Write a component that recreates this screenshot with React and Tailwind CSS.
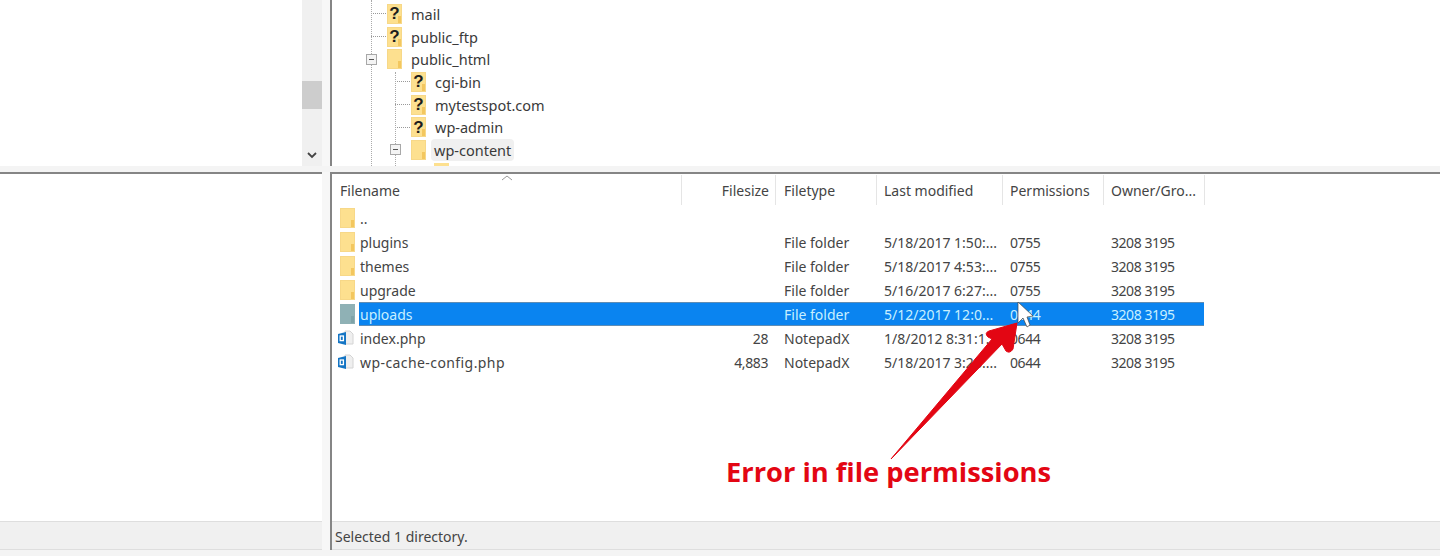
const FONT = "font-['Noto_Sans','Open_Sans',sans-serif]";

function Folder({ unknown, selected }) {
  return (
    <span className={"relative block h-[20px] w-[15px] shrink-0 border " + (selected ? "border-[#8fb1b5] bg-[#8fb1b5]" : "border-[#f7d888] bg-[#fde08f]")}>
      <span className={"absolute right-0 bottom-0 h-[7px] w-[3px] " + (selected ? "bg-[#7fa3a8]" : "bg-[#f3c75f]")} />
      {unknown && (
        <span className="absolute inset-0 flex items-center justify-center font-['Liberation_Sans',sans-serif] text-[17px] leading-none font-bold text-[#1c1c1c]">
          ?
        </span>
      )}
    </span>
  );
}

function TreeRow({ label, indent, unknown, minus, active }) {
  return (
    <div className={"flex h-[22.7px] items-center " + indent}>
      <span className="flex w-[21px] shrink-0 items-center">
        {minus ? (
          <span className="relative z-10 flex h-[11px] w-[11px] items-center justify-center border border-[#a8a8a8] bg-[#f4f4f4]">
            <span className="h-px w-[5px] bg-[#555]" />
          </span>
        ) : (
          <span className="ml-[5px] w-[15px] border-t border-dotted border-[#999]" />
        )}
      </span>
      <Folder unknown={unknown} />
      <span className={"rounded-sm px-[3px] text-[14.5px] leading-[22px] text-[#3a3a3a] " + (active ? "ml-[5px] bg-[#f0f0f0]" : "ml-[6px]")}>
        {label}
      </span>
    </div>
  );
}

const files = [
  { name: "..", folder: true },
  { name: "plugins", folder: true, type: "File folder", date: "5/18/2017 1:50:...", perm: "0755" },
  { name: "themes", folder: true, type: "File folder", date: "5/18/2017 4:53:...", perm: "0755" },
  { name: "upgrade", folder: true, type: "File folder", date: "5/16/2017 6:27:...", perm: "0755" },
  { name: "uploads", folder: true, type: "File folder", date: "5/12/2017 12:0...", perm: "0644", selected: true },
  { name: "index.php", size: "28", type: "NotepadX", date: "1/8/2012 8:31:1...", perm: "0644" },
  { name: "wp-cache-config.php", size: "4,883", type: "NotepadX", date: "5/18/2017 3:28:...", perm: "0644", wide: true },
];

function PhpIcon() {
  return (
    <svg width="18" height="17" viewBox="0 0 18 17">
      <path d="M8 1h5l3 3v10H8z" fill="#efefef" stroke="#d4d4d4" />
      <path d="M1 4l8-2v13l-8-2z" fill="#1475c4" />
      <rect x="3.2" y="6" width="3.2" height="4.6" fill="none" stroke="#fff" strokeWidth="1.3" />
    </svg>
  );
}

function FileRow({ f }) {
  return (
    <div className="flex h-[24px] items-center">
      <span className="flex w-[27px] shrink-0 pl-[5px]">
        {f.folder ? (
          <span className="ml-[3px]">
            <Folder selected={f.selected} />
          </span>
        ) : (
          <PhpIcon />
        )}
      </span>
      <div
        className={
          "grid h-[24px] w-[845px] grid-cols-[322px_94px_101px_126px_101px_101px] items-center text-[14px] " +
          (f.selected ? "border-y border-[#5f8db5] bg-[#0a84f0] text-[#c8f0ff]" : "text-[#444]")
        }
      >
        <span className={"pl-px " + (f.wide ? "tracking-[0.42px]" : "")}>{f.name}</span>
        <span className="pr-[7px] text-right tracking-[-0.4px]">{f.size}</span>
        <span className="pl-[9px]">{f.type}</span>
        <span className="pl-[8px] whitespace-nowrap">{f.date}</span>
        <span className="pl-[8px] tracking-[-0.4px]">{f.perm}</span>
        {f.type && <span className="pl-[8px] tracking-[-0.45px]">3208 3195</span>}
      </div>
    </div>
  );
}

export default function App() {
  return (
    <div className={"relative flex h-[556px] w-[1440px] flex-col overflow-hidden bg-white " + FONT}>
      {/* top panes */}
      <div className="flex h-[166px] shrink-0">
        <div className="flex w-[322px] justify-end">
          <div className="flex w-[20px] flex-col items-center bg-[#f0f0f0]">
            <div className="mt-[81px] h-[28px] w-full bg-[#cdcdcd]" />
            <svg width="10" height="7" viewBox="0 0 10 7" className="mt-[43px]">
              <path d="M1 1l4 4 4-4" fill="none" stroke="#444" strokeWidth="1.8" />
            </svg>
          </div>
        </div>
        <div className="w-[8px] bg-[#f7f7f7]" />
        <div className="relative flex-1 overflow-hidden border-l-2 border-[#858585] pt-[2.5px]">
          <div className="absolute top-0 left-[39px] h-full border-l border-dotted border-[#aaa]" />
          <div className="absolute top-[72px] left-[63px] h-[94px] border-l border-dotted border-[#aaa]" />
          <TreeRow label="mail" indent="pl-[34px]" unknown />
          <TreeRow label="public_ftp" indent="pl-[34px]" unknown />
          <TreeRow label="public_html" indent="pl-[34px]" minus />
          <TreeRow label="cgi-bin" indent="pl-[58px]" unknown />
          <TreeRow label="mytestspot.com" indent="pl-[58px]" unknown />
          <TreeRow label="wp-admin" indent="pl-[58px]" unknown />
          <TreeRow label="wp-content" indent="pl-[58px]" minus active />
          <div className="mt-[1.5px] ml-[102px] h-[8px] w-[15px] bg-[#fde08f]" />
        </div>
      </div>

      {/* splitter */}
      <div className="h-[6px] shrink-0 bg-[#f4f4f4]" />

      {/* bottom panes */}
      <div className="flex min-h-0 flex-1">
        <div className="flex w-[322px] flex-col border-t-2 border-[#858585]">
          <div className="flex-1" />
          <div className="h-[29px] border-y border-[#dedede] bg-[#f0f0f0]" />
        </div>
        <div className="w-[8px] bg-[#f7f7f7]" />
        <div className="flex flex-1 flex-col border-t-2 border-l-2 border-[#858585]">
          <div className="relative flex h-[31px] items-center pt-px text-[14px] text-[#444]">
            <svg width="12" height="6" viewBox="0 0 12 6" className="absolute top-px left-[169px]">
              <path d="M1 5l5-4 5 4" fill="none" stroke="#999" strokeWidth="1" />
            </svg>
            <span className="flex h-full w-[350px] items-center border-r border-[#e5e5e5] pt-px pl-[8px]">Filename</span>
            <span className="flex h-full w-[94px] items-center justify-end border-r border-[#e5e5e5] pt-px pr-[6px]">Filesize</span>
            <span className="flex h-full w-[101px] items-center border-r border-[#e5e5e5] pt-px pl-[8px]">Filetype</span>
            <span className="flex h-full w-[126px] items-center border-r border-[#e5e5e5] pt-px pl-[7px]">Last modified</span>
            <span className="flex h-full w-[101px] items-center border-r border-[#e5e5e5] pt-px pl-[7px]">Permissions</span>
            <span className="flex h-full w-[101px] items-center border-r border-[#e5e5e5] pt-px pl-[7px]">Owner/Gro...</span>
          </div>
          <div className="flex-1 pt-px">
            {files.map((f) => (
              <FileRow key={f.name} f={f} />
            ))}
          </div>
          <div className="flex h-[29px] items-center border-y border-[#dedede] bg-[#f0f0f0] pt-px pl-[3px] text-[14px] text-[#444]">
            Selected 1 directory.
          </div>
        </div>
      </div>
      <div className="h-[6px] shrink-0 bg-[#f4f4f4]" />

      {/* annotation over the screenshot */}
      <svg width="1440" height="556" className="pointer-events-none absolute top-0 left-0">
        <path
          d="M891 459 L992 339 L988 337 Q984 333 989 331 L1017 323 L1013 349 Q1010 354 1006 351 L1002 344 Z"
          fill="#e30613"
          stroke="#e30613"
          strokeLinejoin="round"
        />
        <path
          d="M1018 302 L1018 323 L1023 318 L1027 327 L1030 325 L1027 317 L1033 316 Z"
          fill="#fff"
          stroke="#444"
          strokeWidth="0.7"
        />
      </svg>
      <span className="absolute top-[453px] left-[726px] font-['Open_Sans',sans-serif] text-[27.3px] leading-[38px] font-bold whitespace-nowrap text-[#e30613]">
        Error in file permissions
      </span>
    </div>
  );
}
